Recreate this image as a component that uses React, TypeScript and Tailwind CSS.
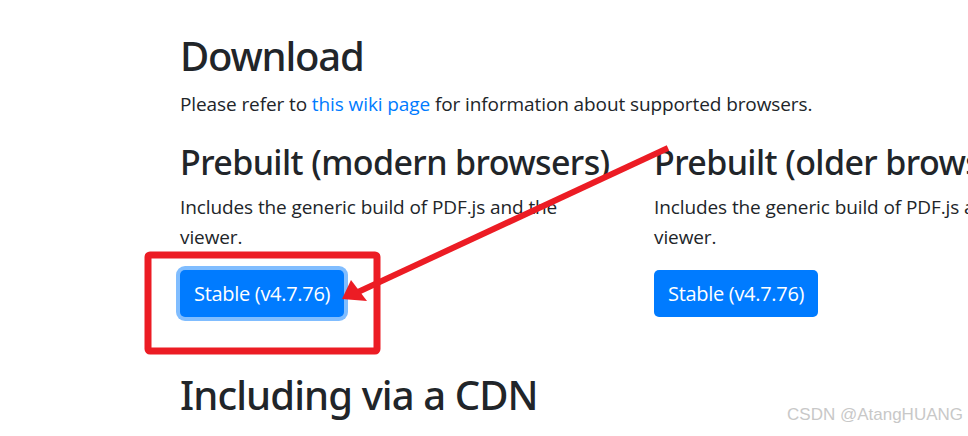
import React from "react";

const font = { fontFamily: '"Open Sans", "Noto Sans", sans-serif' };
const hfont = { fontFamily: '"Noto Sans", "Open Sans", sans-serif' };

function Col({ title, focused }: { title: string; focused?: boolean }) {
  return (
    <div className="flex flex-col">
      <h2 style={hfont} className="text-[34px] leading-[42px] font-medium text-[#212529] whitespace-nowrap tracking-[-0.6px]">{title}</h2>
      <p className="mt-[9px] text-[19px] leading-[30px] text-[#212529] tracking-[-0.1px]">
        Includes the generic build of PDF.js and the viewer.
      </p>
      <div className="mt-[18px] flex">
        <button
          className={
            "h-[47px] px-[14px] rounded-[5px] bg-[#007bff] text-white text-[20px] tracking-[-0.3px] " +
            (focused ? "ring-4 ring-[#80bdff]" : "")
          }
        >
          Stable (v4.7.76)
        </button>
      </div>
    </div>
  );
}

export default function App() {
  return (
    <div className="relative w-[968px] h-[436px] overflow-hidden bg-white" style={font}>
      <div className="pl-[180px] pt-[30px] flex flex-col">
        <h1 style={hfont} className="text-[40px] leading-[52px] font-medium text-[#212529] tracking-[-1.2px]">Download</h1>
        <p className="mt-[7px] text-[19px] leading-[30px] text-[#212529] tracking-[-0.1px] whitespace-nowrap">
          Please refer to <span className="text-[#007bff]">this wiki page</span> for information about supported browsers.
        </p>
        <div className="mt-[22px] grid grid-cols-[430px_430px] gap-x-[44px]">
          <Col title="Prebuilt (modern browsers)" focused />
          <Col title="Prebuilt (older browsers)" />
        </div>
        <h2 style={hfont} className="mt-[53px] text-[40px] leading-[50px] font-medium text-[#212529] tracking-[-0.9px]">Including via a CDN</h2>
      </div>

      <svg className="absolute left-0 top-0 pointer-events-none" width="968" height="436">
        <rect x="148" y="255" width="229" height="96" fill="none" stroke="#ec1c24" strokeWidth="7" rx="2" />
        <line x1="668" y1="148" x2="358" y2="292" stroke="#ec1c24" strokeWidth="6" />
        <polygon points="342,299 351,280 367,301" fill="#ec1c24" />
      </svg>

      <div
        className="absolute right-[5px] bottom-[9px] text-[17px] text-[#c8c8c8]"
        style={{ fontFamily: '"Liberation Sans", Arial, sans-serif' }}
      >
        CSDN @AtangHUANG
      </div>
    </div>
  );
}
